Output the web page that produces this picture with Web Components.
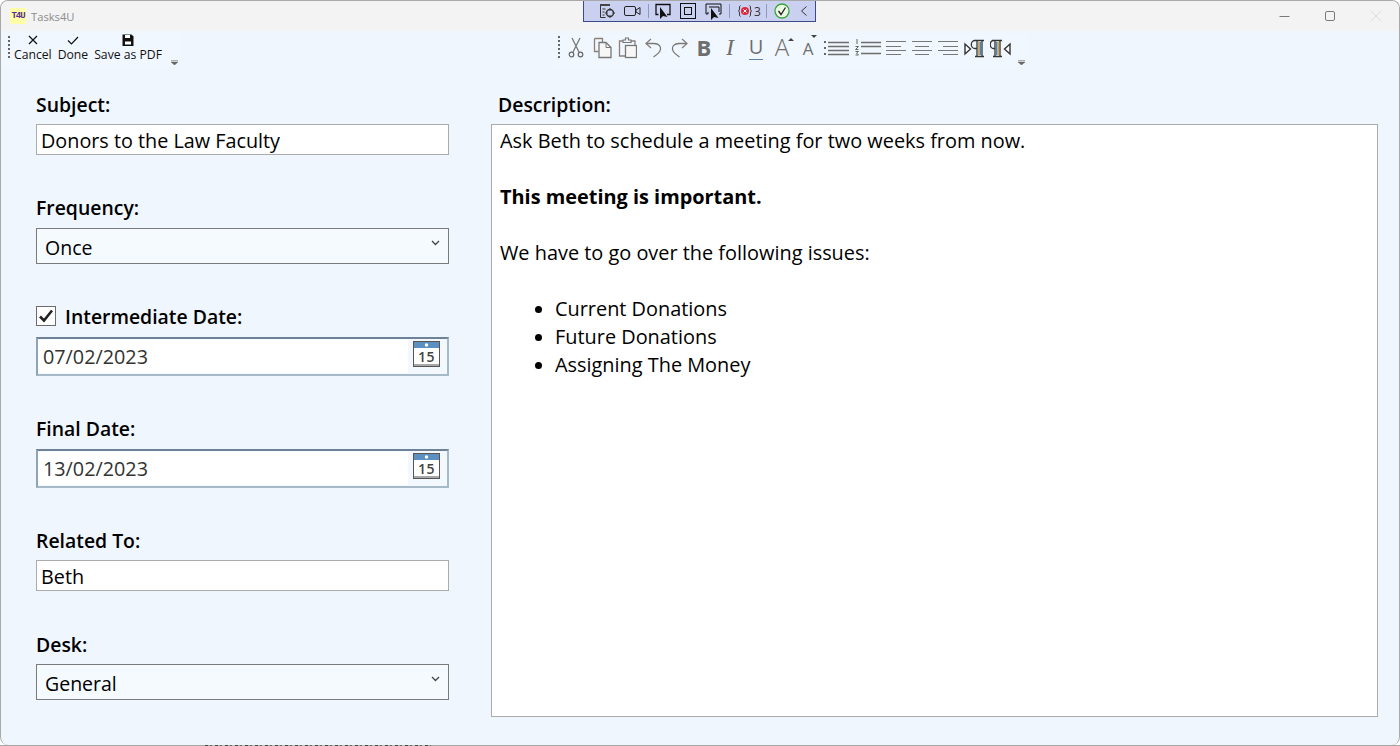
<!DOCTYPE html>
<html>
<head>
<meta charset="utf-8">
<title>Tasks4U</title>
<style>
    html, body { margin: 0; height: 100%; overflow: hidden; background: #fff; }
    body { font-family: "Open Sans", "Noto Sans", sans-serif; }
    li::marker { font-size: 19px; }
</style>
</head>
<body>
<app-window>
    <title-bar slot="title"></title-bar>
    <debug-bar slot="over"></debug-bar>
    <main-toolbar slot="tools"></main-toolbar>
    <form-field label="Subject:" gap="7"><text-box>Donors to the Law Faculty</text-box></form-field>
    <form-field label="Frequency:" gap="8"><combo-box>Once</combo-box></form-field>
    <form-field label="Intermediate Date:" gap="8" check><date-box>07/02/2023</date-box></form-field>
    <form-field label="Final Date:" gap="8"><date-box>13/02/2023</date-box></form-field>
    <form-field label="Related To:" gap="7"><text-box>Beth</text-box></form-field>
    <form-field label="Desk:" gap="7" style="margin-top:1px"><combo-box>General</combo-box></form-field>
    <rich-text slot="right">
        <p>Ask Beth to schedule a meeting for two weeks from now.</p>
        <p>&nbsp;</p>
        <p><b>This meeting is important.</b></p>
        <p>&nbsp;</p>
        <p>We have to go over the following issues:</p>
        <p>&nbsp;</p>
        <ul>
            <li>Current Donations</li>
            <li>Future Donations</li>
            <li>Assigning The Money</li>
        </ul>
    </rich-text>
</app-window>
<desk-edge></desk-edge>

<script>
const FONT = '"Open Sans", "Noto Sans", sans-serif';

class AppWindow extends HTMLElement {
    constructor() {
        super();
        this.attachShadow({mode: 'open'}).innerHTML = `
            <style>
                :host {
                    display: flex;
                    flex-direction: column;
                    position: relative;
                    box-sizing: border-box;
                    width: 1400px;
                    height: 745px;
                    border: solid 1px #a9a9a9;
                    border-bottom: 0;
                    border-radius: 8px 8px 8px 8px;
                    overflow: hidden;
                    background: #eff6fe;
                    font-family: ${FONT};
                    color: #000;
                }
                .body {
                    flex: 1;
                    display: grid;
                    grid-template-columns: 413px 887px;
                    column-gap: 42px;
                    padding: 20px 0 0 35px;
                }
                .left {
                    display: flex;
                    flex-direction: column;
                    gap: 39px;
                }
            </style>
            <slot name="title"></slot>
            <slot name="tools"></slot>
            <slot name="over"></slot>
            <div class="body">
                <div class="left"><slot></slot></div>
                <slot name="right"></slot>
            </div>
        `;
    }
}

// one row of the desktop shows under the window
class DeskEdge extends HTMLElement {
    constructor() {
        super();
        this.attachShadow({mode: 'open'}).innerHTML = `
            <style>
                :host {
                    display: block;
                    height: 1px;
                    background:
                        repeating-linear-gradient(90deg, #444 0 3px, #aaa 3px 5px, #666 5px 7px, #bbb 7px 10px) 205px 0 / 226px 1px no-repeat,
                        #a6a6a6;
                }
            </style>
        `;
    }
}

class TitleBar extends HTMLElement {
    constructor() {
        super();
        this.attachShadow({mode: 'open'}).innerHTML = `
            <style>
                :host {
                    display: flex;
                    align-items: center;
                    height: 30px;
                    background: #f3f3f3;
                    font-size: 11.2px;
                    color: #8c8c8c;
                    flex: none;
                }
                .logo {
                    width: 16px;
                    height: 16px;
                    margin-left: 9px;
                    margin-right: 5px;
                    background: #ffffa8;
                    color: #5a2d91;
                    font: bold 9px/16px "Liberation Mono", monospace;
                    text-align: center;
                    letter-spacing: -1px;
                }
                .name { flex: 1; }
                .btn { width: 46px; height: 30px; display: grid; place-items: center; }
            </style>
            <span class="logo">T4U</span>
            <span class="name">Tasks4U</span>
            <span class="btn"><svg width="12" height="12"><path d="M1.5 6.5h10" stroke="#7a7a7a"/></svg></span>
            <span class="btn"><svg width="12" height="12"><rect x="1.5" y="1.5" width="9" height="9" rx="1.5" fill="none" stroke="#7a7a7a"/></svg></span>
            <span class="btn"><svg width="12" height="12"><path d="M1 1l10 10M11 1L1 11" stroke="#dcdcdc"/></svg></span>
        `;
    }
}

class DebugBar extends HTMLElement {
    constructor() {
        super();
        this.attachShadow({mode: 'open'}).innerHTML = `
            <style>
                :host {
                    position: absolute;
                    left: 582px;
                    top: -1px;
                    width: 233px;
                    height: 22px;
                    box-sizing: border-box;
                    display: flex;
                    align-items: center;
                    background: #c9d0f0;
                    border: solid 1px #3c4a8c;
                    font-size: 12px;
                    color: #333;
                }
                svg { display: block; flex: none; }
                .grip { width: 5px; height: 16px; margin: 0 6px 0 3px; flex: none;
                    background: radial-gradient(#556 40%, transparent 50%) 0 0 / 2px 2px; }
                .sep { width: 1px; height: 14px; background: #8f98c0; flex: none; }
            </style>
            <span class="grip"></span>
            <svg width="18" height="18" style="margin-right:7px"><path d="M2.5 2.5h9M2.5 2.5v13h5M4.5 7h3M4.5 10h2M4.5 13h2" fill="none" stroke="#333"/><path d="M2 2h10v2H2z" fill="#444"/><circle cx="12" cy="11" r="3.5" fill="none" stroke="#333" stroke-width="1.4"/><path d="M12 6v2.5M12 13.500V16M7 11h2.500M14.500 11H17" stroke="#333"/></svg>
            <svg width="18" height="18" style="margin-right:7px"><rect x="1.500" y="4.500" width="11" height="9" rx="1.500" fill="none" stroke="#222"/><path d="M13 8l4-2.500v7L13 10z" fill="none" stroke="#222"/></svg>
            <span class="sep" style="margin-right:5px"></span>
            <svg width="18" height="18" style="margin-right:7px"><path d="M4.500 12.500h-2.500v-10h14v10h-3" fill="none" stroke="#111" stroke-width="1.300"/><path d="M6 5l0 12 3-3 4.500 1z" fill="#111"/></svg>
            <svg width="18" height="18" style="margin-right:8px"><rect x="1.500" y="1.500" width="15" height="15" fill="none" stroke="#111"/><rect x="5.500" y="5.500" width="7" height="7" fill="none" stroke="#111"/></svg>
            <svg width="18" height="18" style="margin-right:6px"><path d="M3 10v2h-2V2h15v10h-2M4 5h10v5" fill="none" stroke="#111"/><path d="M6 6l0 12 3-3 4.500 1z" fill="#111"/></svg>
            <span class="sep" style="margin-right:7px"></span>
            <svg width="16" height="14" style="margin-right:1px"><path d="M3.500 1.500c-2 0 0 5-2 5.500 2 .5 0 5.500 2 5.500M12.500 1.500c2 0 0 5 2 5.500-2 .5 0 5.500-2 5.500" fill="none" stroke="#333"/><circle cx="8" cy="7" r="4" fill="#e0283c"/><path d="M6.300 5.300l3.400 3.400M9.700 5.300l-3.400 3.400" stroke="#fff"/></svg>
            <span style="margin-right:5px">3</span>
            <span class="sep" style="margin-right:7px"></span>
            <svg width="16" height="16" style="margin-right:10px"><circle cx="8" cy="8" r="7" fill="#eaf8e4" stroke="#3aa63a" stroke-width="1.300"/><path d="M4.500 8l2.500 3.500 4.500-7" fill="none" stroke="#222" stroke-width="1.300"/></svg>
            <svg width="8" height="12"><path d="M6.500 1.500L1.500 6l5 4.500" fill="none" stroke="#333"/></svg>
        `;
    }
}

const ICONS = {
    cut: '<path d="M5 1l7 14M13 1L6 15" stroke="#777" stroke-width="1.300" fill="none"/><circle cx="4.500" cy="17.500" r="2.300" fill="none" stroke="#666" stroke-width="1.200"/><circle cx="13.500" cy="17.500" r="2.300" fill="none" stroke="#666" stroke-width="1.200"/>',
    copy: '<path d="M1.500 1.500h8l0 4M1.500 1.500v13h4" fill="none" stroke="#8a8078" stroke-width="1.300"/><path d="M6 5.500h7l5 5v10H6z" fill="#f7f7f7" stroke="#777" stroke-width="1.300"/><path d="M13 5.500v5h5" fill="none" stroke="#777"/>',
    paste: '<path d="M5 4H1.500v15H7M13 4h4v4" fill="none" stroke="#8a8078" stroke-width="1.300"/><path d="M5 5.500V3h2.500V1h3v2H13v2.500z" fill="none" stroke="#777" stroke-width="1.200"/><rect x="7.500" y="8.500" width="11" height="12" fill="#f7f7f7" stroke="#777" stroke-width="1.300"/>',
    undo: '<path d="M7 11L2 6.500 7 2" fill="none" stroke="#8a8078" stroke-width="1.300"/><path d="M2.500 6.500H10c5 0 7 3 6.500 6-.5 3-4 5.500-7 7.500" fill="none" stroke="#777" stroke-width="1.300"/>',
    redo: '<path d="M12 11l5-4.500L12 2" fill="none" stroke="#8a8078" stroke-width="1.300"/><path d="M16.500 6.500H9c-5 0-7 3-6.500 6 .5 3 4 5.500 7 7.500" fill="none" stroke="#777" stroke-width="1.300"/>',
    bullets: '<path d="M4 5.500h21M4 9.500h21M4 13.500h21M4 17.500h21" stroke="#6d6d6d" stroke-width="1.500"/><path d="M0 4h2v2H0zM0 10h2v2H0zM0 16h2v2H0z" fill="#666"/>',
    numbers: '<path d="M6 5.500h20M6 9.500h20M6 16.500h20" stroke="#6d6d6d" stroke-width="1.500"/><path d="M2 2v5M.500 9.500h3l-3 3h3M.500 14.500h3l-2 1.500 2 2h-3" fill="none" stroke="#666"/>',
    left: '<path d="M1 4.500h20M1 9.500h15M1 13.500h20M1 17.500h15" stroke="#777" stroke-width="1.100"/>',
    center: '<path d="M1 4.500h20M4 9.500h14M1 13.500h20M4 17.500h14" stroke="#777" stroke-width="1.100"/>',
    right: '<path d="M1 4.500h20M6 9.500h15M1 13.500h20M6 17.500h15" stroke="#777" stroke-width="1.100"/>',
    ltr: '<path d="M1 7v10l5.500-5z" fill="#fff" stroke="#333" stroke-width="1.400"/><path d="M13 3.500H11a3.700 4 0 0 0 0 8h2zM13 3.500v15.500M18 3.500v15.500M11 19.500h9M10 3.500h10" fill="none" stroke="#333" stroke-width="1.300"/><path d="M14 5h1.500v13H14z" fill="#f0a030"/><path d="M15.500 5H17v13h-1.500z" fill="#2f8fd0"/>',
    rtl: '<path d="M20 7v10l-5.500-5z" fill="#fff" stroke="#333" stroke-width="1.400"/><path d="M5 3.500H3.500a3.200 4 0 0 0 0 8H5zM5 3.500v15.500M10 3.500v15.500M3 19.500h9M2 3.500h10" fill="none" stroke="#333" stroke-width="1.300"/><path d="M6 5h1.500v13H6z" fill="#2f8fd0"/><path d="M7.500 5H9v13H7.500z" fill="#f0a030"/>'
};

class MainToolbar extends HTMLElement {
    constructor() {
        super();
        const ic = (name, w, gap) => `<svg width="${w}" height="22" viewBox="0 0 ${w} 22" style="margin-left:${gap}px">${ICONS[name]}</svg>`;
        const more = '<path d="M0 1.500h7M0 3l3.500 3L7 3z" fill="#666" stroke="#666" stroke-width=".5"/>';
        this.attachShadow({mode: 'open'}).innerHTML = `
            <style>
                :host {
                    display: block;
                    position: relative;
                    height: 40px;
                    flex: none;
                    color: #111;
                }
                .bar {
                    position: absolute;
                    top: 2px;
                    height: 34px;
                    display: flex;
                    align-items: flex-start;
                    background: #f1f7fe;
                }
                .grip {
                    position: absolute;
                    left: 7px;
                    top: 3px;
                    width: 2px;
                    height: 24px;
                    background: repeating-linear-gradient(#666 0 2px, transparent 2px 4px);
                }
                .more {
                    position: absolute;
                    bottom: 2px;
                    width: 7px;
                    height: 6px;
                }
                .cmd {
                    display: flex;
                    flex-direction: column;
                    align-items: center;
                    font-size: 12.2px;
                    line-height: 15px;
                    white-space: nowrap;
                }
                .cmd svg { display: block; height: 14px; }
                .file { left: 0; width: 178px; padding-left: 13px; box-sizing: border-box; gap: 6px; }
                .edit { left: 551px; width: 475px; height: 33px; top: 3px; }
                .edit .grip { left: 6px; top: 2px; }
                .icons { display: flex; align-items: center; position: absolute; left: 15px; top: 3px; }
                .icons svg { display: block; flex: none; }
                .key { flex: none; text-align: center; color: #6e6e6e; font: 22px/20px ${FONT}; height: 22px; position: relative; }
                .bold { font-weight: 700; width: 26px; margin-left: 2px; }
                .italic { font: italic 24px/20px "Liberation Serif", serif; width: 24px; margin-left: 1px; }
                .under { width: 28px; font-size: 20px; }
                .under i { position: absolute; left: 7px; right: 7px; bottom: -1px; height: 1.5px; background: #5a7fa8; }
                .up { width: 24px; font-size: 24px; font-weight: 300; }
                .down { width: 28px; font-size: 17px; font-weight: 400; line-height: 24px; }
                .key b { position: absolute; width: 0; height: 0; border: solid 3px transparent; }
                .up b { right: 0; top: 1px; border-top: 0; border-bottom: solid 3px #444; }
                .down b { right: 5px; top: -2px; border-bottom: 0; border-top: solid 3px #444; }
            </style>
            <div class="bar file">
                <span class="grip"></span>
                <span class="cmd"><svg width="12" viewBox="0 0 12 14"><path d="M2 3l8 8M10 3l-8 8" stroke="#111" stroke-width="1.200"/></svg>Cancel</span>
                <span class="cmd"><svg width="14" viewBox="0 0 14 14"><path d="M2 7.500l3.500 3.500L12 4" fill="none" stroke="#111" stroke-width="1.200"/></svg>Done</span>
                <span class="cmd"><svg width="12" viewBox="0 0 12 14"><path d="M.500 1.500h9l2 2v9.500H.500z" fill="#111"/><rect x="3" y="2" width="5" height="3" fill="#fff"/><rect x="3" y="8.500" width="6" height="3" fill="#fff"/></svg>Save as PDF</span>
                <svg class="more" style="left:170px" viewBox="0 0 7 6">${more}</svg>
            </div>
            <div class="bar edit">
                <span class="grip"></span>
                <div class="icons">
                    ${ic('cut', 18, 0)}
                    ${ic('copy', 19, 8)}
                    ${ic('paste', 19, 6)}
                    ${ic('undo', 19, 7)}
                    ${ic('redo', 19, 7)}
                    <span class="key bold">B</span>
                    <span class="key italic">I</span>
                    <span class="key under">U<i></i></span>
                    <span class="key up">A<b></b></span>
                    <span class="key down">A<b></b></span>
                    ${ic('bullets', 26, 2)}
                    ${ic('numbers', 26, 5)}
                    ${ic('left', 22, 4)}
                    ${ic('center', 22, 4)}
                    ${ic('right', 22, 4)}
                    ${ic('ltr', 21, 5)}
                    ${ic('rtl', 21, 5)}
                </div>
                <svg class="more" style="left:466px" viewBox="0 0 7 6">${more}</svg>
            </div>
        `;
    }
}

class FormField extends HTMLElement {
    constructor() {
        super();
        const box = this.hasAttribute('check')
            ? `<svg width="20" height="20" viewBox="0 0 20 20"><rect x=".5" y=".5" width="19" height="19" fill="#fff" stroke="#6b6b6b"/><path d="M4 10.500l4 4 8-10" fill="none" stroke="#222" stroke-width="2.600"/></svg>`
            : '';
        this.attachShadow({mode: 'open'}).innerHTML = `
            <style>
                :host { display: block; }
                label {
                    display: flex;
                    align-items: center;
                    gap: 9px;
                    height: 26px;
                    font-size: 19.4px;
                    font-weight: 600;
                    color: #000;
                    margin-bottom: ${this.getAttribute('gap') || 6}px;
                }
            </style>
            <label>${box}<span>${this.getAttribute('label')}</span></label>
            <slot></slot>
        `;
    }
}

class TextBox extends HTMLElement {
    constructor() {
        super();
        this.attachShadow({mode: 'open'}).innerHTML = `
            <style>
                :host {
                    display: block;
                    box-sizing: border-box;
                    height: 31px;
                    padding-left: 4px;
                    border: solid 1px #ababab;
                    background: #fff;
                    font-size: 19.8px;
                    line-height: 31px;
                }
            </style>
            <slot></slot>
        `;
    }
}

class ComboBox extends HTMLElement {
    constructor() {
        super();
        this.attachShadow({mode: 'open'}).innerHTML = `
            <style>
                :host {
                    display: flex;
                    justify-content: space-between;
                    align-items: center;
                    box-sizing: border-box;
                    height: 36px;
                    padding: 2px 8px 0 8px;
                    border: solid 1px #7a7a7a;
                    background: #f5faff;
                    font-size: 19.5px;
                }
                svg { margin-top: -8px; }
            </style>
            <slot></slot>
            <svg width="9" height="6"><path d="M1 1l3.500 3.500L8 1" fill="none" stroke="#444" stroke-width="1.300"/></svg>
        `;
    }
}

class DateBox extends HTMLElement {
    constructor() {
        super();
        this.attachShadow({mode: 'open'}).innerHTML = `
            <style>
                :host {
                    display: flex;
                    justify-content: space-between;
                    align-items: center;
                    box-sizing: border-box;
                    height: 39px;
                    padding: 1px 7px 1px 0;
                    border: solid 2px;
                    border-color: #6e8397 #a6b9c9 #a6b9c9 #8ea3b5;
                    background: #f3f8fe;
                    font-size: 19.8px;
                    color: #333;
                }
                .value { box-sizing: border-box; background: #fff; align-self: stretch; width: 370px; padding-left: 5px; line-height: 33px; }
                svg { margin-top: -5px; }
            </style>
            <span class="value"><slot></slot></span>
            <svg width="27" height="26" viewBox="0 0 27 26">
                <rect x=".5" y=".5" width="26" height="25" fill="#fff" stroke="#555"/>
                <rect x="1" y="1" width="25" height="6" fill="#5c8fc2"/>
                <circle cx="13.500" cy="4" r="1.700" fill="#fff"/>
                <rect x="1" y="23" width="25" height="2" fill="#a8a8a8"/>
                <text x="13.500" y="20.500" text-anchor="middle" font-family="Open Sans" font-size="14" font-weight="600" letter-spacing=".5" fill="#444">15</text>
            </svg>
        `;
    }
}

class RichText extends HTMLElement {
    constructor() {
        super();
        this.attachShadow({mode: 'open'}).innerHTML = `
            <style>
                :host {
                    display: block;
                    box-sizing: border-box;
                    height: 593px;
                    margin-top: 33px;
                    padding: 2px 8px;
                    border: solid 1px #ababab;
                    background: #fff;
                }
                .caption {
                    position: absolute;
                    left: 497px;
                    top: 91px;
                    height: 26px;
                    line-height: 26px;
                    font-size: 19.4px;
                    font-weight: 600;
                }
                ::slotted(p) { margin: 0; font-size: 19.9px; line-height: 28px; }
                ::slotted(ul) { margin: 0; padding-left: 55px; font-size: 19.9px; line-height: 28px; }
            </style>
            <span class="caption">Description:</span>
            <slot></slot>
        `;
    }
}

customElements.define('app-window', AppWindow);
customElements.define('desk-edge', DeskEdge);
customElements.define('title-bar', TitleBar);
customElements.define('debug-bar', DebugBar);
customElements.define('main-toolbar', MainToolbar);
customElements.define('form-field', FormField);
customElements.define('text-box', TextBox);
customElements.define('combo-box', ComboBox);
customElements.define('date-box', DateBox);
customElements.define('rich-text', RichText);
</script>
</body>
</html>
